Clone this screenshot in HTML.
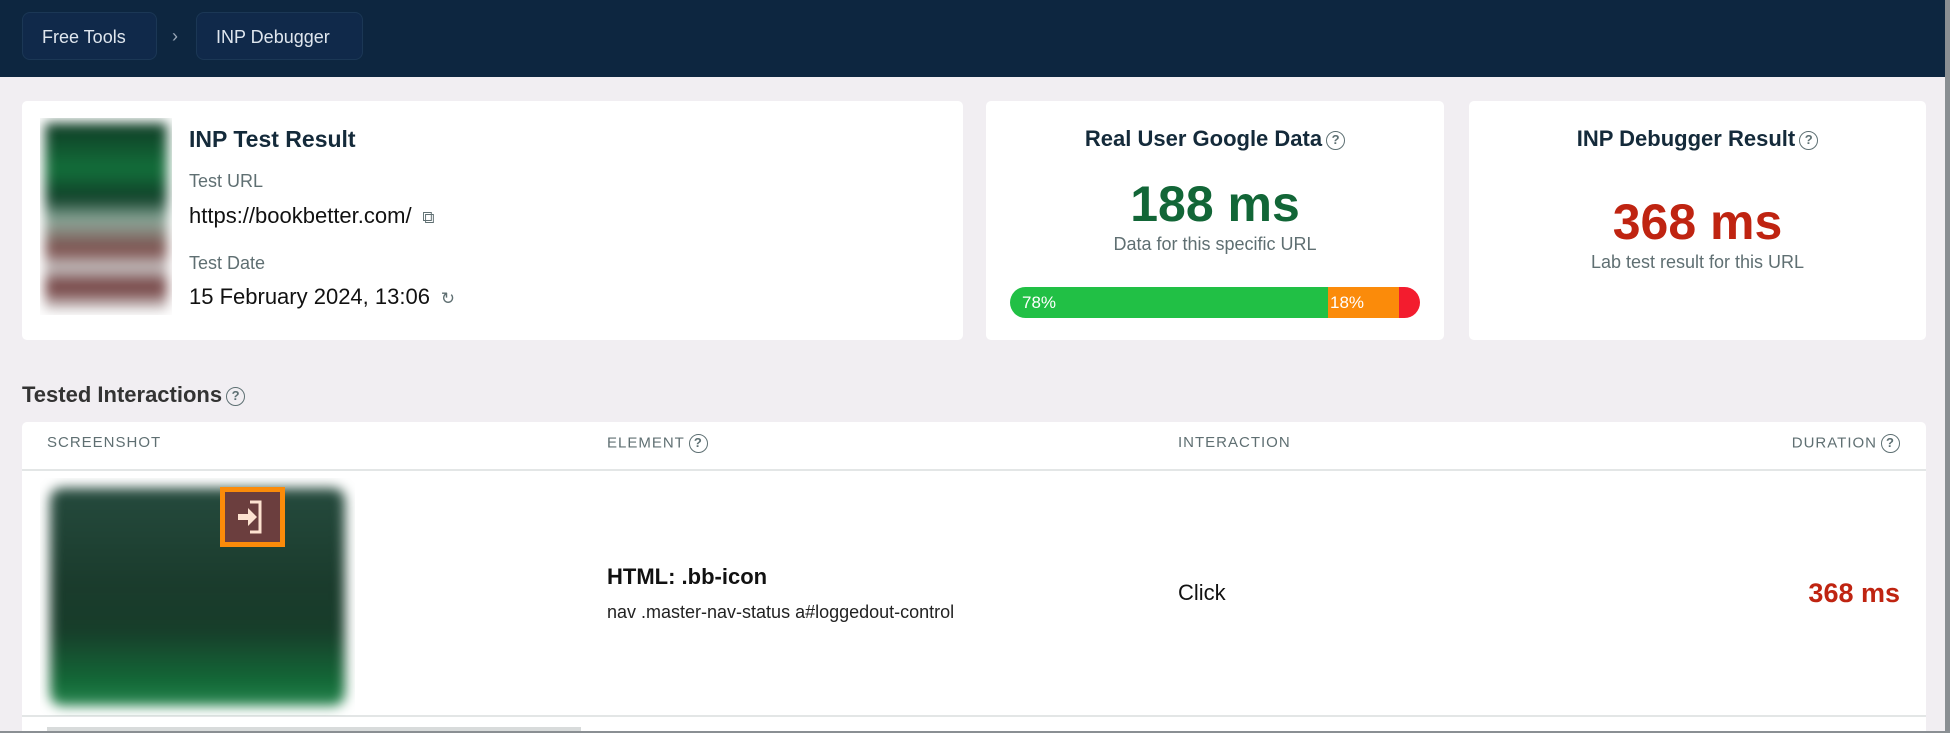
<!DOCTYPE html>
<html><head><meta charset="utf-8"><style>
*{box-sizing:border-box;margin:0;padding:0}
body{width:1950px;height:733px;overflow:hidden;background:#f1eef2;font-family:"Liberation Sans",Roboto,sans-serif;position:relative;color:#1b2a36}
.hdr{position:absolute;left:0;top:0;width:1950px;height:77px;background:#0d2640}
.crumb{position:absolute;top:12px;height:48px;border:1px solid #1b3755;border-radius:8px;background:#10294a;color:#dfe6ee;font-size:18px;line-height:48px;padding:0 19px}
.sep{position:absolute;left:172px;top:26px;color:#9aa8b8;font-size:18px}
.card{position:absolute;background:#fff;border-radius:5px;top:101px;height:239px}
.abs{position:absolute;white-space:nowrap}
.q{display:inline-block;width:19px;height:19px;border:1.5px solid #5e7073;border-radius:50%;font-size:13px;line-height:16px;text-align:center;color:#5e7073;font-weight:bold;vertical-align:middle;margin-left:4px}
.th{font-size:15px;color:#5f6f72;letter-spacing:1px;top:434px}
.blur{filter:blur(6px)}
.edge{position:absolute;left:1945px;top:0;width:5px;height:733px;background:#8a8f93}
.bot{position:absolute;left:0;top:731px;width:1950px;height:2px;background:#8a8f93}
</style></head><body>
<div class="hdr"></div>
<div class="crumb" style="left:22px;width:135px">Free Tools</div>
<div class="sep">›</div>
<div class="crumb" style="left:196px;width:167px">INP Debugger</div>

<div class="card" style="left:22px;width:941px"></div>
<div class="abs" style="left:40px;top:118px;width:132px;height:197px;overflow:hidden">
 <div class="blur" style="position:absolute;left:5px;top:5px;right:5px;bottom:5px;background:linear-gradient(#0e3a24 0%,#13703b 25%,#0f3f28 40%,#8eaa9c 52%,#7a4a48 68%,#c9c7c7 77%,#6b3535 88%,#ddd 100%)"></div>
</div>
<div class="abs" style="left:189px;top:126px;font-size:23px;font-weight:bold;color:#142a3a">INP Test Result</div>
<div class="abs" style="left:189px;top:171px;font-size:18px;color:#5f6f72">Test URL</div>
<div class="abs" style="left:189px;top:203px;font-size:22px;color:#111">https://bookbetter.com/ <span style="color:#5f6f72;font-size:17px">&nbsp;⧉</span></div>
<div class="abs" style="left:189px;top:253px;font-size:18px;color:#5f6f72">Test Date</div>
<div class="abs" style="left:189px;top:284px;font-size:22px;color:#111">15 February 2024, 13:06 <span style="color:#5f6f72;font-size:17px">&nbsp;↻</span></div>

<div class="card" style="left:986px;width:458px"></div>
<div class="abs" style="left:986px;width:458px;text-align:center;top:126px;font-size:22px;font-weight:bold;color:#142a3a">Real User Google Data<span class="q">?</span></div>
<div class="abs" style="left:986px;width:458px;text-align:center;top:175px;font-size:50px;font-weight:bold;color:#126637">188 ms</div>
<div class="abs" style="left:986px;width:458px;text-align:center;top:234px;font-size:18px;color:#5f6f72">Data for this specific URL</div>
<div class="abs" style="left:1010px;top:287px;width:410px;height:31px;border-radius:16px;overflow:hidden;display:flex;font-size:17px;color:#fff;line-height:31px">
 <div style="width:318px;background:#21c045;padding-left:12px">78%</div>
 <div style="width:71px;background:#fb8b0a;padding-left:2px">18%</div>
 <div style="flex:1;background:#f31c2e"></div>
</div>

<div class="card" style="left:1469px;width:457px"></div>
<div class="abs" style="left:1469px;width:457px;text-align:center;top:126px;font-size:22px;font-weight:bold;color:#142a3a">INP Debugger Result<span class="q">?</span></div>
<div class="abs" style="left:1469px;width:457px;text-align:center;top:193px;font-size:50px;font-weight:bold;color:#bf2411">368 ms</div>
<div class="abs" style="left:1469px;width:457px;text-align:center;top:252px;font-size:18px;color:#5f6f72">Lab test result for this URL</div>

<div class="abs" style="left:22px;top:382px;font-size:22px;font-weight:bold;color:#333">Tested Interactions<span class="q">?</span></div>
<div class="abs" style="left:22px;top:422px;width:1904px;height:311px;background:#fff;border-radius:5px 5px 0 0"></div>
<div class="abs" style="left:22px;top:469px;width:1904px;height:2px;background:#e3e6e6"></div>
<div class="abs" style="left:22px;top:715px;width:1904px;height:2px;background:#e3e6e6"></div>
<div class="abs" style="left:47px;top:727px;width:534px;height:4px;background:#d8dbdb"></div>
<div class="abs th" style="left:47px">SCREENSHOT</div>
<div class="abs th" style="left:607px">ELEMENT<span class="q">?</span></div>
<div class="abs th" style="left:1178px">INTERACTION</div>
<div class="abs th" style="right:50px">DURATION<span class="q">?</span></div>

<div class="abs" style="left:40px;top:478px;width:315px;height:238px;overflow:hidden">
 <div class="blur" style="position:absolute;left:10px;top:10px;right:10px;bottom:10px;border-radius:12px;background:linear-gradient(#254a3d 0%,#1a3b2c 45%,#173d2a 65%,#136b38 90%,#2e8a55 100%)"></div>
</div>
<div class="abs" style="left:220px;top:487px;width:65px;height:60px;border:5px solid #fb8b0a;background:#6b3e3e">
 <svg width="55" height="50" viewBox="0 0 55 50"><path d="M25 10h10v30h-10" fill="none" stroke="#fde2d0" stroke-width="3"/><path d="M13 22h10v-6l9 9-9 9v-6h-10z" fill="#fde2d0"/></svg>
</div>
<div class="abs" style="left:607px;top:564px;font-size:22px;font-weight:bold;color:#111">HTML: .bb-icon</div>
<div class="abs" style="left:607px;top:602px;font-size:18px;color:#222">nav .master-nav-status a#loggedout-control</div>
<div class="abs" style="left:1178px;top:580px;font-size:22px;color:#111">Click</div>
<div class="abs" style="right:50px;top:578px;font-size:27px;font-weight:bold;color:#bf2411">368 ms</div>
<div class="edge"></div><div class="bot"></div>
</body></html>
